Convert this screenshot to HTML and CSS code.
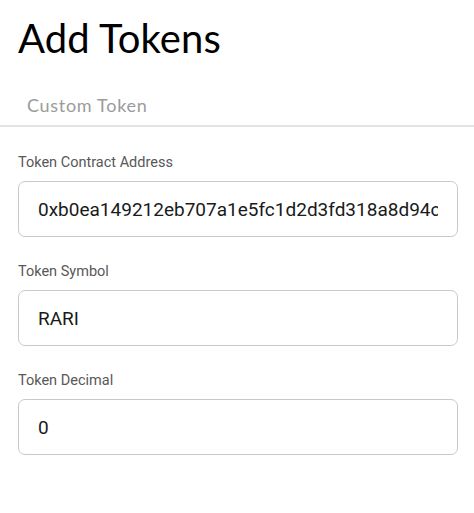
FILE: index.html
```html
<!DOCTYPE html>
<html lang="en">
<head>
<meta charset="utf-8">
<title>Add Tokens</title>
<link rel="stylesheet" href="styles.css">
</head>
<body>
<main class="screen">
  <h1 class="title">Add Tokens</h1>
  <nav class="tabs">
    <span class="tab">Custom Token</span>
  </nav>
  <form class="form">
    <div class="field">
      <label class="label" for="addr">Token Contract Address</label>
      <input class="input" id="addr" type="text" readonly value="0xb0ea149212eb707a1e5fc1d2d3fd318a8d94c4">
    </div>
    <div class="field">
      <label class="label" for="sym">Token Symbol</label>
      <input class="input" id="sym" type="text" readonly value="RARI">
    </div>
    <div class="field">
      <label class="label" for="dec">Token Decimal</label>
      <input class="input" id="dec" type="text" readonly value="0">
    </div>
  </form>
</main>
</body>
</html>
```
FILE: styles.css
```css
* { box-sizing: border-box; }
html, body {
  margin: 0;
  padding: 0;
  background: #ffffff;
}
.screen {
  width: 474px;
  min-height: 513px;
  display: flex;
  flex-direction: column;
}
.title {
  margin: 0;
  padding: 14px 0 0 18px;
  font-family: "Lato", "DejaVu Sans", sans-serif;
  font-weight: 400;
  font-size: 40px;
  line-height: 48px;
  letter-spacing: 0.1px;
  color: #000000;
}
.tabs {
  display: flex;
  margin-top: 31px;
  border-bottom: 2px solid #e4e4e4;
  padding: 0 0 0 27px;
}
.tab {
  font-family: "Lato", "DejaVu Sans", sans-serif;
  font-size: 18px;
  line-height: 24px;
  letter-spacing: 0.7px;
  color: #9b9b9b;
  padding-bottom: 8px;
}
.form {
  display: flex;
  flex-direction: column;
  gap: 25px;
  padding: 26px 16px 0 18px;
}
.field {
  display: flex;
  flex-direction: column;
  gap: 8px;
}
.label {
  font-family: "Roboto", "Liberation Sans", sans-serif;
  font-size: 14.5px;
  line-height: 20px;
  color: #585858;
}
.input {
  display: block;
  width: 100%;
  height: 56px;
  margin: 0;
  padding: 0 19px 0 19px;
  border: 1px solid #c9c9c9;
  border-radius: 7px;
  background: #ffffff;
  font-family: "Roboto", "Liberation Sans", sans-serif;
  font-size: 19px;
  color: #1a1a1a;
  outline: none;
}
```
